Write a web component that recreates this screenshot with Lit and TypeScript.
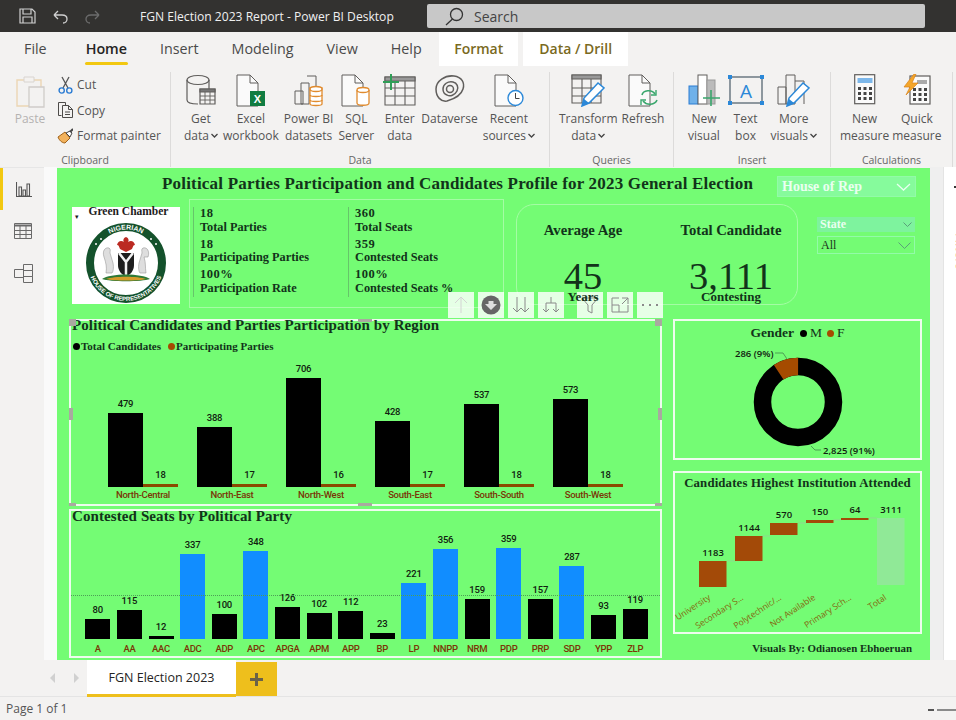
import { LitElement, html, css, svg } from "lit";
import { customElement } from "lit/decorators.js";
import { classMap } from "lit/directives/class-map.js";

const G = "#605e5c";

// ribbon icons, drawn at their real pixel size
const icons: Record<string, any> = {
  paste: svg`<svg width="30" height="34" fill="none"><path d="M2 6h24v26H2z" stroke="#ecd6b4" stroke-width="1.4"/><path d="M9 3h10v5H9z" fill="#f4f2f0" stroke="#d8d4d0"/><path d="M14 13h15v20H14z" fill="#f3f2f1" stroke="#cfccc9" stroke-width="1.3"/></svg>`,
  cut: svg`<svg width="15" height="18" fill="none"><path d="M4 1l6 11M11 1L5 12" stroke="#555" stroke-width="1.3"/><circle cx="3.7" cy="14.5" r="2.6" stroke="#2b7cd3" stroke-width="1.4"/><circle cx="11.3" cy="14.5" r="2.6" stroke="#2b7cd3" stroke-width="1.4"/></svg>`,
  copy: svg`<svg width="18" height="18" fill="none" stroke="#4d4b49"><path d="M4.5 14.5h-3v-13h7v3"/><path d="M5.500 4.500h6l4 4v8h-10z" fill="#f3f2f1"/><path d="M11.500 4.500v4h4M8 11h5M8 13.500h5"/></svg>`,
  painter: svg`<svg width="18" height="16" fill="none"><path d="M1 9l7-5 5 6-5 5c-3 0-6-3-7-6z" fill="#f2b25c" stroke="#a0621a"/><path d="M9 5l4-2 2 2-2 4z" fill="#fff" stroke="#444"/><path d="M13 4l3-3" stroke="#444" stroke-width="2"/></svg>`,
  getdata: svg`<svg width="30" height="32" fill="none" stroke=${G} stroke-width="1.2"><path d="M1 6v20c0 3 5 4 11 4M23 6v9"/><ellipse cx="12" cy="6" rx="11" ry="4.500"/><path d="M14 15h15v15H14z" fill="#f3f2f1"/><path d="M14 15h15v3H14z" fill="#777"/><path d="M19 18v12M24 18v12M14 22h15M14 26h15" stroke-width=".9"/></svg>`,
  excel: svg`<svg width="30" height="33" fill="none"><path d="M1 1h13l8 8v23H1z" fill="#fafafa" stroke=${G}/><path d="M14 1v8h8" stroke=${G}/><rect x="14" y="17" width="15" height="15" fill="#107c41"/><text x="21.500" y="29" text-anchor="middle" fill="#fff" font-family="Liberation Sans" font-weight="700" font-size="11">X</text></svg>`,
  dataset: svg`<svg width="30" height="33" fill="none" stroke=${G}><path d="M1 17h8v13H1zM7 9h8v21H7zM13 2h9v14" fill="#f3f2f1"/><path d="M16 14h12v16c0 2-12 2-12 0z" fill="#fff" stroke="#e08b2e" stroke-width="1.300"/><ellipse cx="22" cy="15" rx="6" ry="2.500" fill="#fff" stroke="#e08b2e" stroke-width="1.300"/><path d="M16 21c0 2 12 2 12 0M16 26c0 2 12 2 12 0" stroke="#e08b2e" stroke-width="1.300"/></svg>`,
  sql: svg`<svg width="30" height="33" fill="none"><path d="M1 1h13l8 8v23H1z" fill="#fafafa" stroke=${G}/><path d="M14 1v8h8" stroke=${G}/><path d="M16 16v13c0 3 12 3 12 0V16" fill="#fff" stroke="#e08b2e" stroke-width="1.300"/><ellipse cx="22" cy="16" rx="6" ry="2.500" fill="#fff" stroke="#e08b2e" stroke-width="1.300"/></svg>`,
  enter: svg`<svg width="33" height="33" fill="none" stroke=${G} stroke-width="1.100"><path d="M2 3h30v28H2z"/><path d="M2 3h30v4H2z" fill="#999"/><path d="M12 7v24M22 7v24M2 14h30M2 22h30"/><path d="M8 0v16M0 8h16" stroke="#2f9e57" stroke-width="2"/></svg>`,
  dataverse: svg`<svg width="33" height="30" fill="none" stroke=${G} stroke-width="1.500"><path d="M3 15C3 7 12 1 21 2c8 1 11 7 9 13-2 7-9 10-16 12-6 1-11-4-11-12z"/><path d="M10 15c0-5 5-8 10-7 4 1 6 5 4 9s-7 6-10 4c-3-1-4-3-4-6z"/><circle cx="17" cy="15" r="3.500"/></svg>`,
  recent: svg`<svg width="30" height="33" fill="none"><path d="M1 1h13l8 8v23H1z" fill="#fafafa" stroke=${G}/><path d="M14 1v8h8" stroke=${G}/><circle cx="21.500" cy="24" r="7.500" fill="#fff" stroke="#2b88d8" stroke-width="1.400"/><path d="M21.500 19v5.500h4" stroke="#444"/></svg>`,
  transform: svg`<svg width="34" height="33" fill="none" stroke=${G} stroke-width="1.100"><path d="M1 1h29v28H1z"/><path d="M1 1h29v4H1z" fill="#999"/><path d="M11 5v24M20 5v24M1 14h29M1 22h29"/><path d="M11 32l2-8L27 9l6 5-15 15z" fill="#fff" stroke="#2b88d8" stroke-width="1.500"/><path d="M11 32l2-7 5 4z" fill="#2b88d8" stroke="none"/></svg>`,
  refresh: svg`<svg width="30" height="33" fill="none"><path d="M1 1h13l8 8v23H1z" fill="#fafafa" stroke=${G}/><path d="M14 1v8h8" stroke=${G}/><path d="M14 21c1-5 10-6 13-1M29 26c-2 5-10 6-14 1" stroke="#3aa76d" stroke-width="1.600"/><path d="M28 16v5h-5M13 31v-5h5" stroke="#3aa76d" stroke-width="1.400"/></svg>`,
  newvisual: svg`<svg width="33" height="33" fill="none"><rect x="1" y="12" width="9" height="18" fill="#6fb1ea" stroke="#2b7cd3"/><rect x="10" y="1" width="9" height="29" fill="#fff" stroke=${G}/><rect x="19" y="6" width="8" height="24" fill="#bbb" stroke="#999"/><path d="M23 16v16M15 24h17" stroke="#3aa76d" stroke-width="1.600"/></svg>`,
  textbox: svg`<svg width="36" height="33" fill="none"><rect x="2" y="3" width="32" height="26" stroke="#4a5a68" stroke-width="1.200"/><g fill="#2b88d8"><rect y="1" width="4" height="4"/><rect x="32" y="1" width="4" height="4"/><rect y="27" width="4" height="4"/><rect x="32" y="27" width="4" height="4"/></g><text x="18" y="24" text-anchor="middle" fill="#2b88d8" font-family="Open Sans" font-size="19">A</text></svg>`,
  more: svg`<svg width="33" height="33" fill="none" stroke=${G}><path d="M1 13h8v17H1zM9 1h9v29H9zM18 7h9v23"/><path d="M10 32l2-8L26 9l6 5-15 15z" fill="#fff" stroke="#2b88d8" stroke-width="1.500"/><path d="M10 32l2-7 5 4z" fill="#2b88d8" stroke="none"/></svg>`,
  measure: svg`<svg width="22" height="31" fill="none"><rect x=".7" y=".7" width="20" height="29" fill="#fafafa" stroke=${G} stroke-width="1.200"/><rect x="3.500" y="4" width="15" height="5" fill="#7cb7ea"/><path d="M4 13h3v3H4zM9.500 13h3v3h-3zM15 13h3v3h-3zM4 18h3v3H4zM9.500 18h3v3h-3zM15 18h3v3h-3zM4 23h3v3H4zM9.500 23h3v3h-3zM15 23h3v3h-3z" fill="#444"/></svg>`,
  quick: svg`<svg width="28" height="31" fill="none"><rect x="7" y="2" width="20" height="28" fill="#fafafa" stroke=${G} stroke-width="1.200"/><rect x="14" y="6" width="10" height="4" fill="#aaa"/><path d="M10 14h3v3h-3zM15.500 14h3v3h-3zM21 14h3v3h-3zM10 19h3v3h-3zM15.500 19h3v3h-3zM21 19h3v3h-3zM10 24h3v3h-3zM15.500 24h3v3h-3zM21 24h3v3h-3z" fill="#444"/><path d="M11 0L1 13h6L3 21l12-12H9l4-9z" fill="#f4a62a" stroke="#d9821a" stroke-width=".7"/></svg>`,
};

const chevron = svg`<svg class="chev" width="7" height="5" fill="none" stroke="#444" stroke-width="1.300"><path d="M.5 1l3 3 3-3"/></svg>`;

type Btn = { icon: string; lines: string[]; more?: boolean; push?: boolean };

const groups: { name: string; cls: string; items: Btn[] }[] = [
  { name: "Data", cls: "data", items: [
    { icon: "getdata", lines: ["Get", "data"], more: true },
    { icon: "excel", lines: ["Excel", "workbook"] },
    { icon: "dataset", lines: ["Power BI", "datasets"] },
    { icon: "sql", lines: ["SQL", "Server"] },
    { icon: "enter", lines: ["Enter", "data"], push: true },
    { icon: "dataverse", lines: ["Dataverse"] },
    { icon: "recent", lines: ["Recent", "sources"], more: true },
  ]},
  { name: "Queries", cls: "queries", items: [
    { icon: "transform", lines: ["Transform", "data"], more: true },
    { icon: "refresh", lines: ["Refresh"] },
  ]},
  { name: "Insert", cls: "insert", items: [
    { icon: "newvisual", lines: ["New", "visual"] },
    { icon: "textbox", lines: ["Text", "box"] },
    { icon: "more", lines: ["More", "visuals"], more: true },
  ]},
  { name: "Calculations", cls: "calc", items: [
    { icon: "measure", lines: ["New", "measure"] },
    { icon: "quick", lines: ["Quick", "measure"] },
  ]},
];

const regions = [
  { name: "North-Central", total: 479, parties: 18 },
  { name: "North-East", total: 388, parties: 17 },
  { name: "North-West", total: 706, parties: 16 },
  { name: "South-East", total: 428, parties: 17 },
  { name: "South-South", total: 537, parties: 18 },
  { name: "South-West", total: 573, parties: 18 },
];

const seats: [string, number][] = [
  ["A", 80], ["AA", 115], ["AAC", 12], ["ADC", 337], ["ADP", 100], ["APC", 348],
  ["APGA", 126], ["APM", 102], ["APP", 112], ["BP", 23], ["LP", 221], ["NNPP", 356],
  ["NRM", 159], ["PDP", 359], ["PRP", 157], ["SDP", 287], ["YPP", 93], ["ZLP", 119],
];
const AVG_SEATS = 170;

const stats = [
  [["18", "Total Parties"], ["18", "Participating Parties"], ["100%", "Participation Rate"]],
  [["360", "Total Seats"], ["359", "Contested Seats"], ["100%", "Contested Seats %"]],
];

// x, top, bottom of each waterfall step in page pixels
const steps = [
  { label: "University", value: 1183, x: 699, top: 561, bottom: 587, end: 711 },
  { label: "Secondary S...", value: 1144, x: 735, top: 536, bottom: 561, end: 744 },
  { label: "Polytechnic/...", value: 570, x: 770, top: 523, bottom: 535, end: 782 },
  { label: "Not Available", value: 150, x: 806, top: 520, bottom: 523, end: 816 },
  { label: "Primary Sch...", value: 64, x: 841, top: 518, bottom: 520, end: 852 },
  { label: "Total", value: 3111, x: 877, top: 518, bottom: 585, end: 887 },
];

@customElement("app-root")
export class AppRoot extends LitElement {
  static styles = css`
    :host {
      display: block;
      width: 956px;
      height: 720px;
      overflow: hidden;
      background: #f3f2f1;
      font-family: "Open Sans", "Liberation Sans", sans-serif;
      color: #333;
    }
    svg { display: block; }

    .titlebar {
      height: 32px;
      background: #333230;
      display: flex;
      align-items: center;
      padding-left: 19px;
      color: #f0f0f0;
      font-size: 12.1px;
    }
    .qa { display: flex; gap: 17px; margin-right: 40px; align-items: center; }
    .doc { width: 287px; white-space: nowrap; }
    .search {
      width: 498px;
      height: 24px;
      background: #c8c8c8;
      border-radius: 2px;
      display: flex;
      align-items: center;
      gap: 10px;
      padding-left: 18px;
      box-sizing: border-box;
      color: #444;
      font-size: 14px;
    }

    .tabs { height: 34px; display: flex; font-size: 14.3px; color: #4a4a4a; padding-left: 7.5px; }
    .tab { padding: 0 16.5px; line-height: 34px; position: relative; white-space: nowrap; }
    .tab.file { margin-right: 6px; }
    .tab.home { color: #252423; font-weight: 600; }
    .tab.home::after {
      content: "";
      position: absolute;
      left: 16px;
      right: 16px;
      bottom: 1px;
      height: 3px;
      background: #f2c811;
      border-radius: 2px;
    }
    .tab.ctx { background: #fff; color: #7a6a1e; padding: 0 15px; font-weight: 600; font-size: 14px; }
    .tab.ctx.first { margin-left: 1px; }
    .tab.drill { margin-left: 5px; padding: 0 16px; }

    .ribbon { height: 101px; display: flex; font-size: 12px; line-height: 17px; color: #555; }
    .group {
      box-sizing: border-box;
      border-right: 1px solid #dcdbda;
      margin-top: 6px;
      display: flex;
      flex-direction: column;
    }
    .group .cap { margin-top: auto; text-align: center; font-size: 10.5px; line-height: 13px; color: #666; padding-bottom: 0; }
    .row { display: flex; }
    .clipboard { width: 171px; }
    .clipboard .row { padding-left: 12px; gap: 9px; }
    .data { width: 379px; }
    .data .row { padding-left: 13px; gap: 5px; }
    .queries { width: 124px; }
    .queries .row { padding-left: 9px; gap: 4px; }
    .insert { width: 157px; }
    .insert .row { padding-left: 13.5px; gap: 7px; }
    .calc { width: 122px; }
    .calc .row { padding-left: 9px; gap: 3px; }
    .btn {
      min-width: 32px;
      display: flex;
      flex-direction: column;
      align-items: center;
      text-align: center;
      white-space: nowrap;
      padding-top: 2px;
    }
    .btn.push { margin-left: 4px; }
    .btn .ic { height: 36px; display: flex; align-items: flex-start; }
    .line { display: flex; align-items: center; gap: 2px; }
    .paste { color: #b5b3b1; width: 36px; }
    .small { display: flex; flex-direction: column; padding-top: 0; }
    .small div { height: 25.5px; display: flex; align-items: center; gap: 4px; }
    .small .sic { width: 16px; display: flex; justify-content: center; }

    .body { height: 493px; display: flex; }
    .rail {
      width: 44px;
      display: flex;
      flex-direction: column;
      border-top: 1px solid #e6e6e6;
    }
    .rail div { height: 42px; display: flex; align-items: center; justify-content: center; padding-left: 2px; }
    .rail .on { border-left: 3px solid #f2c811; padding-left: 0; }
    .gutter { width: 13px; background: #fafafa; }
    .gutter.r { background: #efefef; }
    .pane { width: 13px; background: #fff; overflow: hidden; position: relative; border-left: 1px solid #e4e4e4; box-sizing: border-box; }
    .pane::before { content: ""; position: absolute; right: 0; top: 19px; width: 2px; height: 2px; background: #333; }
    .pane span {
      display: block;
      writing-mode: vertical-rl;
      font-size: 13px;
      color: #222;
      margin: 66px 0 0 8px;
    }

    .canvas {
      width: 873px;
      background: #74fc74;
      margin-top: 1px;
      color: #12331a;
      font-family: "Liberation Serif", "DejaVu Serif", serif;
      font-weight: 700;
      position: relative;
    }
    .head { height: 31px; display: flex; padding-left: 105px; box-sizing: border-box; }
    .head h1 { margin: 7px 0 0; width: 615px; font-size: 17px; line-height: 18px; letter-spacing: .19px; white-space: nowrap; }
    .slicer {
      width: 139px;
      height: 21px;
      margin-top: 8px;
      background: #86fb9c;
      border: 1px solid #92fba8;
      box-sizing: border-box;
      color: #eafff0;
      font-size: 14px;
      display: flex;
      align-items: center;
      justify-content: space-between;
      padding: 0 4px;
      font-weight: 700;
    }

    .top { height: 120px; display: flex; padding-left: 15px; }
    .logo {
      width: 108px;
      height: 97px;
      margin-top: 8px;
      background: #fff;
      position: relative;
      flex: none;
      color: #1c1c1c;
    }
    .logo b { display: block; text-align: center; font-size: 11.5px; line-height: 9px; padding-left: 5px; white-space: nowrap; }
    .logo i { position: absolute; left: 3px; top: 6px; font-style: normal; font-size: 7px; line-height: 8px; }
    .kpi {
      width: 315px;
      height: 109px;
      margin-left: 9px;
      box-sizing: border-box;
      border: 1px solid #a4fca4;
      display: flex;
      padding: 7px 0 0 3px;
      flex: none;
    }
    .col {
      width: 155px;
      height: 90px;
      border-left: 1px solid #66c56a;
      padding-left: 6px;
      display: flex;
      flex-direction: column;
      gap: 2px;
    }
    .stat { height: 30px; font-size: 12.3px; line-height: 13.500px; white-space: nowrap; }
    .stat em { display: block; font-style: normal; font-size: 12.5px; font-weight: 700; letter-spacing: .5px; }

    .age {
      width: 282px;
      height: 101px;
      margin: 5px 0 0 12px;
      box-sizing: border-box;
      border: 1px solid #a4fca4;
      border-radius: 18px;
      display: flex;
      flex: none;
    }
    .card { display: flex; flex-direction: column; align-items: center; padding-top: 16px; box-sizing: border-box; }
    .card:first-child { width: 132px; }
    .card:last-child { width: 148px; padding-left: 16px; }
    .card .h { font-size: 14.700px; line-height: 18px; white-space: nowrap; }
    .card .n { font-size: 38.5px; line-height: 32px; font-weight: 400; margin-top: 21px; }
    .card .u { font-size: 13px; line-height: 10px; position: relative; z-index: 3; white-space: nowrap; }
    .states { margin: 18px 0 0 19px; width: 98px; flex: none; }
    .st {
      height: 15px;
      background: #7ef39e;
      color: #eafff0;
      font-size: 12px;
      display: flex;
      align-items: center;
      justify-content: space-between;
      padding: 0 3px;
    }
    .all {
      height: 18px;
      margin-top: 4px;
      box-sizing: border-box;
      border: 1px solid #92fba8;
      font-size: 12px;
      font-weight: 400;
      display: flex;
      align-items: center;
      justify-content: space-between;
      padding: 0 3px;
      color: #1c331c;
    }

    .main { display: grid; grid-template-columns: 593px 249px; column-gap: 11px; padding-left: 12px; }
    .left, .right { display: flex; flex-direction: column; }
    .box { border: 2px solid #eefcee; box-sizing: border-box; position: relative; }
    .box h2 { margin: -4px 0 0; font-size: 15px; line-height: 16px; white-space: nowrap; padding-left: 1px; letter-spacing: .1px; }

    .regions { height: 187px; }
    .legend { display: flex; gap: 1px; font-size: 11px; line-height: 12px; margin: 7px 0 0 2px; align-items: center; white-space: nowrap; }
    .dot { width: 7px; height: 7px; border-radius: 50%; background: #000; flex: none; }
    .dot.b { background: #a54b00; margin-left: 6px; }
    .plot { height: 132px; display: flex; gap: 19px; padding-left: 37px; margin-top: 3px; }
    .reg { width: 70px; display: flex; flex-direction: column; justify-content: flex-end; }
    .pair { display: grid; grid-template-columns: 35px 35px; align-items: end; }
    .barcol { display: flex; flex-direction: column; align-items: center; }
    .val { font-family: Roboto, "Liberation Sans", sans-serif; font-weight: 500; font-size: 9.5px; line-height: 12px; color: #10200f; margin-bottom: 3px; letter-spacing: -.2px; }
    .bar { width: 100%; background: #000; }
    .bar.brown { background: #8a4a00; height: 3px; }
    .bar.blue { background: #118dff; }
    .axis { font-family: Roboto, "Liberation Sans", sans-serif; font-weight: 500; font-size: 9.5px; line-height: 14px; color: #7a3606; white-space: nowrap; letter-spacing: -.3px; }
    .reglabels { display: flex; gap: 19px; padding-left: 37px; margin-top: 1px; }
    .reglabels span { width: 70px; text-align: center; }

    .seats { height: 149px; margin-top: 3px; }
    .seats h2 { margin-top: -3px; }
    .plot2 { position: relative; height: 115px; display: grid; grid-template-columns: repeat(18, 31.62px); padding-left: 11px; align-items: end; }
    .plot2 .bar { width: 25px; }
    .avg { position: absolute; left: 0; right: 0; border-top: 1px dotted #4d9f55; }
    .seatlabels { display: grid; grid-template-columns: repeat(18, 31.62px); padding-left: 11px; text-align: center; margin-top: 3px; }

    .gender { height: 141px; }
    .gender .t { display: flex; justify-content: center; align-items: center; gap: 3px; font-size: 13.5px; line-height: 16px; padding: 4px 0; }
    .gender .t span { font-weight: 400; }
    .gender .t h3 { margin: 0 3px 0 0; font-size: 13.5px; }
    .gender .t .dot.b { margin-left: 2px; }
    .inst { height: 163px; margin-top: 11px; }
    .inst h3 { margin: 2px 0 6px; font-size: 12.8px; line-height: 16px; text-align: center; letter-spacing: .15px; white-space: nowrap; }
    .inst svg { overflow: visible; }
    .credit { font-size: 10.9px; line-height: 14px; text-align: right; padding: 7px 10px 0 0; white-space: nowrap; }
    .chart-label { font-family: "Open Sans", "Liberation Sans", sans-serif; font-weight: 600; font-size: 9.5px; fill: #10200f; }
    .chart-axis { font-family: "Open Sans", "Liberation Sans", sans-serif; font-weight: 400; font-size: 8.5px; fill: #84640e; }

    .hd { position: absolute; background: #a9a9a0; }
    .hd.tl { left: -2px; top: -2px; width: 7px; height: 7px; }
    .hd.tr { right: -2px; top: -2px; width: 7px; height: 7px; }
    .hd.bl { left: -2px; bottom: -2px; width: 7px; height: 3px; }
    .hd.br { right: -2px; bottom: -2px; width: 7px; height: 3px; }
    .hd.tm { left: 287px; top: -2px; width: 14px; height: 3px; }
    .hd.bm { left: 287px; bottom: -2px; width: 14px; height: 3px; }
    .hd.ml { left: -2px; top: 87px; width: 4px; height: 12px; }
    .hd.mr { right: -2px; top: 87px; width: 4px; height: 12px; }

    .tools { position: absolute; left: 377px; top: -29px; display: flex; gap: 4px; z-index: 2; }
    .tools div { width: 26px; height: 26px; background: rgba(255,255,255,.82); display: flex; align-items: center; justify-content: center; }
    .tools .sp { margin-left: 9px; }

    .pages { height: 36px; display: flex; position: relative; padding-left: 87px; }
    .arrow { position: absolute; top: 13px; width: 0; height: 0; border-top: 5px solid transparent; border-bottom: 5px solid transparent; }
    .arrow.l { left: 50px; border-right: 5px solid #d0d0d0; }
    .arrow.rt { left: 74px; border-left: 5px solid #d0d0d0; }
    .page {
      width: 149px;
      height: 37px;
      background: #fff;
      border-bottom: 3px solid #eebf1c;
      box-sizing: border-box;
      text-align: center;
      font-size: 12.5px;
      line-height: 36px;
      color: #252423;
    }
    .plus { width: 41px; height: 34px; margin-top: 2px; background: #eebf1c; display: flex; align-items: center; justify-content: center; }
    .status {
      height: 23px;
      border-top: 1px solid #e4e4e4;
      display: flex;
      justify-content: space-between;
      padding-left: 6px;
      font-size: 12px;
      line-height: 24px;
      color: #555;
      box-sizing: border-box;
    }
    .zoomctl { display: flex; gap: 3px; padding-top: 12px; }
    .zoomctl i { display: block; height: 2px; background: #555; width: 6px; }
    .zoomctl i + i { width: 19px; background: #8a8a8a; }
  `;

  private logo() {
    return svg`<svg width="108" height="88" viewBox="0 9 108 88">
      <defs>
        <path id="topArc" d="M20.500 56a33.500 33.500 0 0 1 67 0"/>
        <path id="botArc" d="M16 56a38 38 0 0 0 76 0"/>
      </defs>
      <circle cx="54" cy="56" r="36" fill="none" stroke="#14522c" stroke-width="8"/>
      <text font-family="Liberation Sans" font-size="7" fill="#fff" font-weight="700"><textPath href="#topArc" startOffset="50%" text-anchor="middle">NIGERIAN</textPath></text>
      <text font-family="Liberation Sans" font-size="6" fill="#fff" font-weight="700"><textPath href="#botArc" startOffset="50%" text-anchor="middle">HOUSE OF REPRESENTATIVES</textPath></text>
      <g fill="#fff"><circle cx="24" cy="37" r="1"/><circle cx="29" cy="32" r="1"/><circle cx="79" cy="32" r="1"/><circle cx="84" cy="37" r="1"/></g>
      <path d="M32 50c-2-6 1-10 5-9 2 1 1 3 1 5l3 10c1 5 0 9-1 10h-6c1-6 0-10-2-16zM76 50c2-6-1-10-5-9-2 1-1 3-1 5l-3 10c-1 5 0 9 1 10h6c-1-6 0-10-2-16z" fill="#dedede" stroke="#999" stroke-width=".6"/>
      <path d="M54 30c-3 1-3 4-2 5-3-2-6-1-7 3 2 0 2 2 3 4l6 3 6-3c1-2 1-4 3-4-1-4-4-5-7-3 1-1 1-4-2-5z" fill="#bb2a22"/>
      <path d="M46 46h16v12c0 6-4 10-8 11-4-1-8-5-8-11z" fill="#1d1d1d"/>
      <path d="M47 46l7 9 7-9M54 55v13" fill="none" stroke="#f2f2f2" stroke-width="2.500"/>
      <path d="M30 72c8-6 40-6 48 0-8 3-40 3-48 0z" fill="#2f7a36"/>
      <path d="M34 72c8-3 32-3 40 0-8 2-32 2-40 0z" fill="#d59a2a"/>
    </svg>`;
  }

  private toolIcons() {
    const s = "#8a8a8a";
    return [
      svg`<svg width="16" height="18" fill="none" stroke="#d4d4d4"><path d="M8 17V1M2 7l6-6 6 6"/></svg>`,
      svg`<svg width="20" height="20"><circle cx="10" cy="10" r="9.500" fill="#666"/><path d="M10 15l-6-6h3.500V6h5v3H16z" fill="#ddd"/></svg>`,
      svg`<svg width="18" height="18" fill="none" stroke=${s}><path d="M5 1v15M1 12l4 4 4-4M13 1v15M9 12l4 4 4-4"/></svg>`,
      svg`<svg width="18" height="18" fill="none" stroke=${s}><path d="M9 1v6M4 7h10M4 7v9M14 7v9M1 13l3 3 3-3M11 13l3 3 3-3"/></svg>`,
      svg`<svg width="18" height="18" fill="none" stroke=${s}><path d="M1 2h16l-6 7v8l-4-2V9z"/></svg>`,
      svg`<svg width="18" height="16" fill="none" stroke=${s}><path d="M8 1H1v14h16V8M1 8h7v7M11 1h6v6M17 1l-6 6"/></svg>`,
      svg`<svg width="16" height="4" fill=${s}><rect y="1" width="2" height="2"/><rect x="7" y="1" width="2" height="2"/><rect x="14" y="1" width="2" height="2"/></svg>`,
    ];
  }

  private waterfall() {
    return svg`<svg width="245" height="135" viewBox="675 497 245 135">
      <path d="M727 561h8M762 536h8M798 523h8M833 520h8M869 518h8" stroke="#8fd98f"/>
      ${steps.map((s, i) => svg`
        <rect x=${s.x} y=${s.top} width="27.500" height=${s.bottom - s.top} fill=${i == 5 ? "#90e997" : "#a34a08"}/>
        <text class="chart-label" x=${s.x + 14} y=${s.top - 5} text-anchor="middle">${s.value}</text>
        <text class="chart-axis" x=${s.end} y="599" text-anchor="end" transform="rotate(-33 ${s.end} 599)">${s.label}</text>`)}
    </svg>`;
  }

  private donut() {
    return svg`<svg width="245" height="112" viewBox="675 345 245 112">
      <circle cx="798" cy="402" r="35.500" fill="none" stroke="#000" stroke-width="17.500"/>
      <circle cx="798" cy="402" r="35.500" fill="none" stroke="#a54b00" stroke-width="17.500" stroke-dasharray="20.500 203" transform="rotate(-123 798 402)"/>
      <path d="M775 353h8l4 6M821 450h-6l-4-4" fill="none" stroke="#4d9f55"/>
      <text class="chart-label" x="735" y="357">286 (9%)</text>
      <text class="chart-label" x="823" y="453.500">2,825 (91%)</text>
    </svg>`;
  }

  private regionChart() {
    const k = 109 / 706;
    return html`<div class="box regions">
      <h2>Political Candidates and Parties Participation by Region</h2>
      <div class="legend"><span class="dot"></span>Total Candidates<span class="dot b"></span>Participating Parties</div>
      <div class="plot">
        ${regions.map((r) => html`<div class="reg"><div class="pair">
          <div class="barcol"><span class="val">${r.total}</span><div class="bar" style="height:${r.total * k}px"></div></div>
          <div class="barcol"><span class="val">${r.parties}</span><div class="bar brown"></div></div>
        </div></div>`)}
      </div>
      <div class="reglabels axis">${regions.map((r) => html`<span>${r.name}</span>`)}</div>
      ${["tl", "tr", "bl", "br", "tm", "bm", "ml", "mr"].map((p) => html`<span class=${"hd " + p}></span>`)}
      <div class="tools">${this.toolIcons().map((ic, i) => html`<div class=${classMap({ sp: i == 4 })}>${ic}</div>`)}</div>
    </div>`;
  }

  private seatChart() {
    const k = 91 / 359;
    return html`<div class="box seats">
      <h2>Contested Seats by Political Party</h2>
      <div class="plot2">
        <div class="avg" style="bottom:${AVG_SEATS * k}px"></div>
        ${seats.map(([, v]) => html`<div class="barcol">
          <span class="val">${v}</span>
          <div class=${classMap({ bar: true, blue: v > AVG_SEATS })} style="height:${v * k}px"></div>
        </div>`)}
      </div>
      <div class="seatlabels axis">${seats.map(([n]) => html`<span>${n}</span>`)}</div>
    </div>`;
  }

  render() {
    return html`
      <div class="titlebar">
        <div class="qa">
          <svg width="17" height="16" fill="none" stroke="#d0d0d0" stroke-width="1.200"><path d="M1 1h12l3 3v11H1zM4 1v5h8V1M4 15V9h9v6"/></svg>
          <svg width="15" height="15" fill="none" stroke="#d0d0d0" stroke-width="1.300"><path d="M1 6h8c7 0 6 8 1 8M1 6l4-4M1 6l4 4"/></svg>
          <svg width="15" height="15" fill="none" stroke="#6c6c6c" stroke-width="1.300"><path d="M14 6H6c-7 0-6 8-1 8M14 6l-4-4M14 6l-4 4"/></svg>
        </div>
        <div class="doc">FGN Election 2023 Report - Power BI Desktop</div>
        <div class="search">
          <svg width="19" height="19" fill="none" stroke="#333" stroke-width="1.300"><circle cx="11.500" cy="7.500" r="6"/><path d="M7.500 12L1 18"/></svg>
          Search
        </div>
      </div>
      <div class="tabs">
        <span class="tab file">File</span>
        <span class="tab home">Home</span>
        <span class="tab">Insert</span>
        <span class="tab">Modeling</span>
        <span class="tab">View</span>
        <span class="tab">Help</span>
        <span class="tab ctx first">Format</span>
        <span class="tab ctx drill">Data / Drill</span>
      </div>
      <div class="ribbon">
        <div class="group clipboard">
          <div class="row">
            <div class="btn paste"><div class="ic">${icons.paste}</div><span>Paste</span></div>
            <div class="small">
              <div><span class="sic">${icons.cut}</span>Cut</div>
              <div><span class="sic">${icons.copy}</span>Copy</div>
              <div><span class="sic">${icons.painter}</span>Format painter</div>
            </div>
          </div>
          <div class="cap">Clipboard</div>
        </div>
        ${groups.map((g) => html`<div class=${"group " + g.cls}>
          <div class="row">
            ${g.items.map((b) => html`<div class=${classMap({ btn: true, push: !!b.push })}>
              <div class="ic">${icons[b.icon]}</div>
              ${b.lines.map((l, i) => html`<span class="line">${l}${b.more && i == b.lines.length - 1 ? chevron : ""}</span>`)}
            </div>`)}
          </div>
          <div class="cap">${g.name}</div>
        </div>`)}
      </div>

      <div class="body">
        <div class="rail">
          <div class="on"><svg width="16" height="15" fill="none" stroke="#555" stroke-width="1.100"><path d="M.5 0v14.500H16M3 5h2.500v9H3zM7 8h2.500v6H7zM11 2h2.500v12H11z"/></svg></div>
          <div><svg width="18" height="16" fill="none" stroke="#6a6a6a"><path d="M.5.500h17v15H.5z"/><path d="M.5 2.500h17" stroke-width="2"/><path d="M6 3v12M12 3v12M1 7.500h16M1 11.500h16"/></svg></div>
          <div><svg width="19" height="19" fill="none" stroke="#6a6a6a"><path d="M.5 5.500h9v8h-9zM9.500.5h9v6h-9zM9.500 6.500h9v6h-9zM9.500 12.500h9v6h-9z"/></svg></div>
        </div>
        <div class="gutter"></div>
        <div class="canvas">
          <div class="head">
            <h1>Political Parties Participation and Candidates Profile for 2023 General Election</h1>
            <div class="slicer">House of Rep<svg width="15" height="8" fill="none" stroke="#e8fff0" stroke-width="1.300"><path d="M1 1l6.500 6L14 1"/></svg></div>
          </div>
          <div class="top">
            <div class="logo"><b>Green Chamber</b><i>▾</i>${this.logo()}</div>
            <div class="kpi">
              ${stats.map((c) => html`<div class="col">${c.map(([v, l]) => html`<div class="stat"><em>${v}</em>${l}</div>`)}</div>`)}
            </div>
            <div class="age">
              <div class="card"><span class="h">Average Age</span><span class="n">45</span><span class="u">Years</span></div>
              <div class="card"><span class="h">Total Candidate</span><span class="n">3,111</span><span class="u">Contesting</span></div>
            </div>
            <div class="states">
              <div class="st">State<svg width="9" height="5" fill="none" stroke="#5aa07a"><path d="M.5.500l4 4 4-4"/></svg></div>
              <div class="all">All<svg width="13" height="7" fill="none" stroke="#5aa07a"><path d="M.5.500l6 6 6-6"/></svg></div>
            </div>
          </div>
          <div class="main">
            <div class="left">${this.regionChart()}${this.seatChart()}</div>
            <div class="right">
              <div class="box gender">
                <div class="t"><h3>Gender</h3><i class="dot"></i><span>M</span><i class="dot b"></i><span>F</span></div>
                ${this.donut()}
              </div>
              <div class="box inst">
                <h3>Candidates Highest Institution Attended</h3>
                ${this.waterfall()}
              </div>
              <div class="credit">Visuals By: Odianosen Ebhoeruan</div>
            </div>
          </div>
        </div>
        <div class="gutter r"></div>
        <div class="pane"><span>Filters</span></div>
      </div>

      <div class="pages">
        <span class="arrow l"></span><span class="arrow rt"></span>
        <div class="page">FGN Election 2023</div>
        <div class="plus"><svg width="13" height="13"><path d="M5 0h3v5h5v3H8v5H5V8H0V5h5z" fill="#6b6248"/></svg></div>
      </div>
      <div class="status"><span>Page 1 of 1</span><div class="zoomctl"><i></i><i></i></div></div>
    `;
  }
}
